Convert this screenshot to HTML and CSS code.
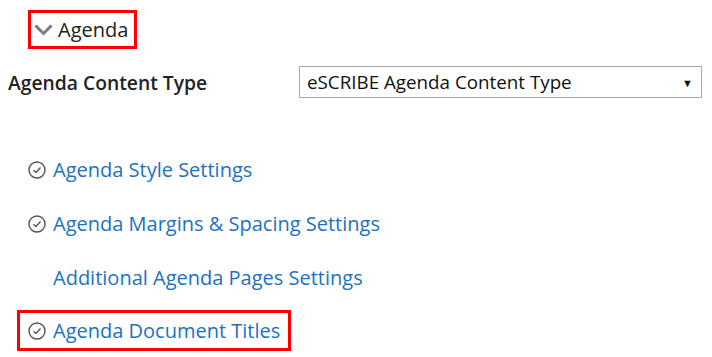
FILE: index.html
```html
<!DOCTYPE html>
<html lang="en">
<head>
  <meta charset="UTF-8">
  <title>Agenda Settings</title>
  <link rel="stylesheet" href="styles.css">
</head>
<body>
  <div class="panel">
    <div class="section-head highlight">
      <svg class="chevron" width="19" height="12" viewBox="0 0 19 12">
        <path d="M1.5 1.5 L9.5 9.5 L17.5 1.5" fill="none" stroke="#7a7a7a" stroke-width="3"/>
      </svg>
      <span>Agenda</span>
    </div>

    <div class="field-row">
      <label for="contentType">Agenda Content Type</label>
      <div class="select-box" id="contentType">
        <span>eSCRIBE Agenda Content Type</span>
        <span class="arrow">&#9660;</span>
      </div>
    </div>

    <ul class="links">
      <li>
        <svg class="check" width="18" height="18" viewBox="0 0 18 18">
          <circle cx="9" cy="9" r="8" fill="none" stroke="#555" stroke-width="1.4"/>
          <path d="M5.5 9.2 L8 11.5 L12.5 6.5" fill="none" stroke="#555" stroke-width="1.4"/>
        </svg>
        <a href="#">Agenda Style Settings</a>
      </li>
      <li>
        <svg class="check" width="18" height="18" viewBox="0 0 18 18">
          <circle cx="9" cy="9" r="8" fill="none" stroke="#555" stroke-width="1.4"/>
          <path d="M5.5 9.2 L8 11.5 L12.5 6.5" fill="none" stroke="#555" stroke-width="1.4"/>
        </svg>
        <a href="#">Agenda Margins &amp; Spacing Settings</a>
      </li>
      <li>
        <span class="check"></span>
        <a href="#">Additional Agenda Pages Settings</a>
      </li>
      <li class="highlight">
        <svg class="check" width="18" height="18" viewBox="0 0 18 18">
          <circle cx="9" cy="9" r="8" fill="none" stroke="#555" stroke-width="1.4"/>
          <path d="M5.5 9.2 L8 11.5 L12.5 6.5" fill="none" stroke="#555" stroke-width="1.4"/>
        </svg>
        <a href="#">Agenda Document Titles</a>
      </li>
    </ul>
  </div>
</body>
</html>
```

FILE: styles.css
```css
body {
  font-family: "Open Sans", Arial, sans-serif;
  margin: 0;
  background: #fff;
  color: #222;
}

.panel {
  padding: 10px 8px 0 8px;
}

.highlight {
  border: 3px solid #f00;
}

.section-head {
  display: inline-flex;
  align-items: center;
  gap: 5px;
  margin-left: 20px;
  padding: 0 6px 0 3px;
  height: 33px;
  font-size: 20px;
}

.field-row {
  display: flex;
  align-items: center;
  margin-top: 17px;
}

.field-row label {
  width: 291px;
  font-size: 19.3px;
  font-weight: 600;
}

.select-box {
  display: flex;
  justify-content: space-between;
  align-items: center;
  width: 386px;
  height: 30px;
  padding: 0 8px 0 7px;
  border: 1px solid #a9a9a9;
  font-size: 18.8px;
  color: #111;
}

.select-box .arrow {
  font-size: 11px;
}

.links {
  list-style: none;
  margin: 54px 0 0 0;
  padding: 0;
}

.links li {
  display: flex;
  align-items: center;
  gap: 7px;
  height: 35px;
  margin-bottom: 19px;
  padding-left: 20px;
  font-size: 20px;
}

.links li.highlight {
  display: inline-flex;
  margin-top: -4px;
  margin-left: 9px;
  padding: 0 8px 0 8px;
  height: 35px;
}

.check {
  width: 18px;
  height: 18px;
  flex-shrink: 0;
}

.links a {
  color: #1b72c2;
  text-decoration: none;
}
```
